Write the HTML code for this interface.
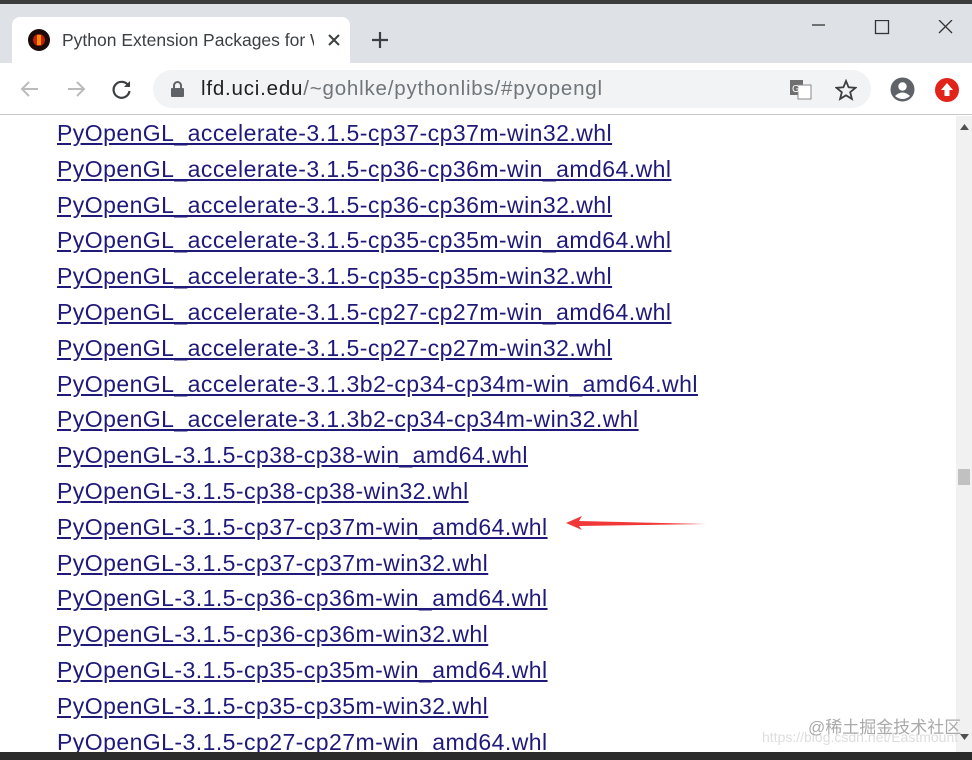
<!DOCTYPE html>
<html><head><meta charset="utf-8"><style>
*{margin:0;padding:0;box-sizing:border-box}
body{width:972px;height:760px;overflow:hidden;background:#fff;font-family:"Liberation Sans","Noto Sans CJK SC",sans-serif;position:relative}
.topbar{position:absolute;left:0;top:0;width:972px;height:4px;background:#3c3c3c}
.strip{position:absolute;left:0;top:4px;width:972px;height:59px;background:#dee1e6}
.tab{position:absolute;left:12px;top:17px;width:338px;height:46px;background:#fff;border-radius:8px 8px 0 0}
.tab .t{position:absolute;left:50px;top:13px;font-size:17.5px;color:#3c4043;white-space:nowrap;width:252px;overflow:hidden}
.toolbar{position:absolute;left:0;top:63px;width:972px;height:52px;background:#fff;border-bottom:1px solid #c8c8c8}
.omni{position:absolute;left:153px;top:7px;width:718px;height:38px;background:#f1f3f4;border-radius:19px}
.url{position:absolute;left:48px;top:7px;font-size:20.5px;letter-spacing:0.8px;color:#202124;white-space:nowrap}
.url span{color:#70757a}
.links{position:absolute;left:57px;top:116px}
.links a{display:block;font-size:23px;line-height:35.8px;color:#1f1a7a;text-decoration:underline;white-space:nowrap;letter-spacing:0.45px}
.sb{position:absolute;left:956px;top:116px;width:16px;height:636px;background:#f1f1f1}
.bottom{position:absolute;left:0;top:752px;width:972px;height:8px;background:#2b2b2b}
.wm{position:absolute;left:808px;top:713px;font-size:17px;color:#aaa}
.wm2{position:absolute;left:762px;top:729px;font-size:14px;color:#ddd}
</style></head><body>
<div class="topbar"></div>
<div class="strip"></div>
<div class="tab">
<svg style="position:absolute;left:16px;top:12px" width="22" height="22"><circle cx="11" cy="11" r="11" fill="#1a0a0a"/><circle cx="11" cy="11" r="6" fill="#c02000"/><rect x="9" y="6" width="4" height="10" fill="#ff8a00"/></svg>
<div class="t">Python Extension Packages for Windows</div>
<svg style="position:absolute;left:315px;top:16px" width="14" height="14"><path d="M2 2L12 12M12 2L2 12" stroke="#3c4043" stroke-width="2"/></svg>
</div>
<svg style="position:absolute;left:371px;top:31px" width="18" height="18"><path d="M9 1V17M1 9H17" stroke="#3c4043" stroke-width="2.2"/></svg>
<svg style="position:absolute;left:810px;top:20px" width="150" height="16"><path d="M2 5H15" stroke="#333" stroke-width="1.3"/><rect x="65.5" y="0.5" width="13" height="13" fill="none" stroke="#333" stroke-width="1.3"/><path d="M129 0L142 13M142 0L129 13" stroke="#333" stroke-width="1.3"/></svg>
<div class="toolbar">
<svg style="position:absolute;left:20px;top:17px" width="20" height="18"><path d="M18 9H3M9 2L2 9L9 16" stroke="#bbb" stroke-width="2" fill="none"/></svg>
<svg style="position:absolute;left:66px;top:17px" width="20" height="18"><path d="M2 9H17M11 2L18 9L11 16" stroke="#bbb" stroke-width="2" fill="none"/></svg>
<svg style="position:absolute;left:111px;top:16px" width="22" height="22"><path d="M17 6A8 8 0 1 0 18.5 12" stroke="#3c4043" stroke-width="2.2" fill="none"/><path d="M19 2V8H13Z" fill="#3c4043"/></svg>
<div class="omni">
<svg style="position:absolute;left:18px;top:11px" width="13" height="16"><path d="M3 7V4.5A3.5 3.5 0 0 1 10 4.5V7" stroke="#5f6368" stroke-width="2" fill="none"/><rect x="0" y="7" width="13" height="9" rx="1" fill="#5f6368"/></svg>
<div class="url">lfd.uci.edu<span>/~gohlke/pythonlibs/#pyopengl</span></div>
<svg style="position:absolute;left:637px;top:10px" width="22" height="20"><rect x="0" y="0" width="13" height="15" fill="#6f6f6f"/><rect x="8" y="5" width="13" height="14" fill="#fff" stroke="#8a8a8a"/><text x="2" y="12" font-size="10" fill="#fff" font-family="Liberation Sans">G</text></svg>
<svg style="position:absolute;left:682px;top:9px" width="22" height="22"><path d="M11 2L13.6 8.3L20.5 8.8L15.2 13.2L16.9 19.9L11 16.3L5.1 19.9L6.8 13.2L1.5 8.8L8.4 8.3Z" fill="none" stroke="#3c4043" stroke-width="1.8"/></svg>
</div>
<svg style="position:absolute;left:890px;top:14px" width="25" height="25"><circle cx="12.5" cy="12.5" r="12" fill="#5f6368"/><circle cx="12.5" cy="9.5" r="4.2" fill="#fff"/><path d="M5 19Q12.5 12 20 19Q12.5 25 5 19Z" fill="#fff"/></svg>
<svg style="position:absolute;left:935px;top:15px" width="24" height="24"><circle cx="12" cy="12" r="12" fill="#e2231a"/><path d="M12 5L18 12H14.5V18H9.5V12H6Z" fill="#fff"/></svg>
</div>
<div class="links">
<a>PyOpenGL_accelerate-3.1.5-cp37-cp37m-win32.whl</a>
<a>PyOpenGL_accelerate-3.1.5-cp36-cp36m-win_amd64.whl</a>
<a>PyOpenGL_accelerate-3.1.5-cp36-cp36m-win32.whl</a>
<a>PyOpenGL_accelerate-3.1.5-cp35-cp35m-win_amd64.whl</a>
<a>PyOpenGL_accelerate-3.1.5-cp35-cp35m-win32.whl</a>
<a>PyOpenGL_accelerate-3.1.5-cp27-cp27m-win_amd64.whl</a>
<a>PyOpenGL_accelerate-3.1.5-cp27-cp27m-win32.whl</a>
<a>PyOpenGL_accelerate-3.1.3b2-cp34-cp34m-win_amd64.whl</a>
<a>PyOpenGL_accelerate-3.1.3b2-cp34-cp34m-win32.whl</a>
<a>PyOpenGL-3.1.5-cp38-cp38-win_amd64.whl</a>
<a>PyOpenGL-3.1.5-cp38-cp38-win32.whl</a>
<a>PyOpenGL-3.1.5-cp37-cp37m-win_amd64.whl</a>
<a>PyOpenGL-3.1.5-cp37-cp37m-win32.whl</a>
<a>PyOpenGL-3.1.5-cp36-cp36m-win_amd64.whl</a>
<a>PyOpenGL-3.1.5-cp36-cp36m-win32.whl</a>
<a>PyOpenGL-3.1.5-cp35-cp35m-win_amd64.whl</a>
<a>PyOpenGL-3.1.5-cp35-cp35m-win32.whl</a>
<a>PyOpenGL-3.1.5-cp27-cp27m-win_amd64.whl</a>
</div>
<svg style="position:absolute;left:566px;top:515px" width="142" height="16"><path d="M0 8L16 1L13 6L140 9L13 11L16 15Z" fill="#f03838"/></svg>
<div class="sb">
<svg style="position:absolute;left:4px;top:8px" width="9" height="6"><path d="M0 6L4.5 0L9 6Z" fill="#505050"/></svg>
<div style="position:absolute;left:2px;top:353px;width:12px;height:16px;background:#c1c1c1"></div>
<svg style="position:absolute;left:4px;top:618px" width="9" height="6"><path d="M0 0L4.5 6L9 0Z" fill="#505050"/></svg>
</div>
<div class="wm2">https://blog.csdn.net/Eastmount</div>
<div class="wm">@稀土掘金技术社区</div>
<div class="bottom"></div>
</body></html>
